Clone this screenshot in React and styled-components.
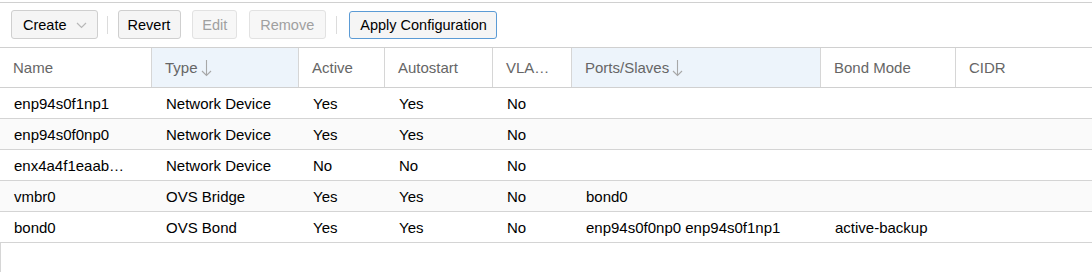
import React from "react";
import styled, { createGlobalStyle } from "styled-components";

const Global = createGlobalStyle`
  html, body { margin: 0; padding: 0; background: #fff; }
  body { font-family: "Liberation Sans", Arial, sans-serif; font-size: 15px; color: #000; }
`;

const COLS = "152px 147px 86px 108px 79px 249px 135px 1fr";

const Panel = styled.div`
  margin-top: 2px;
  border-top: 1px solid #d0d0d0;
  width: 1092px;
  height: 270px;
  display: flex;
  flex-direction: column;
`;

const Toolbar = styled.div`
  display: flex;
  align-items: center;
  height: 45px;
  padding: 0 0 1px 11px;
  border-bottom: 1px solid #d0d0d0;
  box-sizing: border-box;
`;

const Button = styled.button`
  box-sizing: border-box;
  padding: 0 ${(p) => p.$pr ?? 9}px 0 ${(p) => p.$pl ?? 9}px;
  margin-right: ${(p) => p.$mr ?? 11}px;
  font-family: inherit;
  font-size: 14.5px;
  background: ${(p) => (p.disabled ? "#f7f7f7" : "#f5f5f5")};
  color: ${(p) => (p.disabled ? "#a0a0a0" : "#000")};
  border: 1px solid ${(p) => (p.$primary ? "#5b9bd5" : p.disabled ? "#e2e2e2" : "#cfcfcf")};
  border-radius: 3px;
  display: flex;
  align-items: center;
  gap: 9px;
  cursor: default;
  margin-top: ${(p) => (p.$primary ? 1 : 0)}px;
  height: ${(p) => (p.$primary ? 28 : 29)}px;
`;

const Sep = styled.div`
  width: 1px;
  height: 18px;
  background: #dcdcdc;
  margin-right: ${(p) => p.$mr ?? 10}px;
`;

const Chevron = styled.svg`
  width: 11px;
  height: 7px;
  margin-top: 1px;
`;

const HeaderRow = styled.div`
  display: grid;
  grid-template-columns: ${COLS};
  height: 40px;
  border-bottom: 1px solid #d0d0d0;
  box-sizing: border-box;
`;

const HeadCell = styled.div`
  display: flex;
  align-items: center;
  padding-left: 13px;
  color: #666;
  background: ${(p) => (p.$sorted ? "#edf4fb" : "#fff")};
  border-right: ${(p) => (p.$last ? "none" : "1px solid #d6d6d6")};
  white-space: nowrap;
  overflow: hidden;
`;

const SortArrow = styled.svg`
  width: 11px;
  height: 18px;
  margin-left: 3px;
  margin-top: 1px;
`;

const Body = styled.div`
  flex: 1;
  border-left: 1px solid #d6d6d6;
`;

const Row = styled.div`
  display: grid;
  grid-template-columns: ${COLS};
  height: 31px;
  box-sizing: border-box;
  border-bottom: 1px solid #d4d4d4;
  background: ${(p) => (p.$alt ? "#fafafa" : "#fff")};
  margin-left: -1px;
`;

const Cell = styled.div`
  display: flex;
  align-items: center;
  padding-left: 14px;
  padding-top: 1px;
  white-space: nowrap;
  overflow: hidden;
  color: #000;
`;

const headers = [
  { t: "Name" },
  { t: "Type", s: true },
  { t: "Active" },
  { t: "Autostart" },
  { t: "VLA…" },
  { t: "Ports/Slaves", s: true },
  { t: "Bond Mode" },
  { t: "CIDR", last: true },
];

const rows = [
  ["enp94s0f1np1", "Network Device", "Yes", "Yes", "No", "", "", ""],
  ["enp94s0f0np0", "Network Device", "Yes", "Yes", "No", "", "", ""],
  ["enx4a4f1eaab…", "Network Device", "No", "No", "No", "", "", ""],
  ["vmbr0", "OVS Bridge", "Yes", "Yes", "No", "bond0", "", ""],
  ["bond0", "OVS Bond", "Yes", "Yes", "No", "enp94s0f0np0 enp94s0f1np1", "active-backup", ""],
];

export default function App() {
  return (
    <>
      <Global />
      <Panel>
        <Toolbar>
          <Button $pl={11} $pr={10} $mr={9}>
            Create
            <Chevron viewBox="0 0 11 7">
              <path d="M1 1 L5.5 5.5 L10 1" fill="none" stroke="#b8b8b8" strokeWidth="1.2" />
            </Chevron>
          </Button>
          <Sep $mr={10} />
          <Button $pl={9} $pr={10}>Revert</Button>
          <Button disabled $mr={12}>Edit</Button>
          <Button disabled $pl={10} $pr={11} $mr={10}>Remove</Button>
          <Sep $mr={12} />
          <Button $primary $pl={10} $pr={9}>Apply Configuration</Button>
        </Toolbar>
        <HeaderRow>
          {headers.map((h) => (
            <HeadCell key={h.t} $sorted={h.s} $last={h.last}>
              {h.t}
              {h.s && (
                <SortArrow viewBox="0 0 11 18">
                  <path d="M5.5 1 V16.5 M1 12 L5.5 16.5 L10 12" fill="none" stroke="#a8a8a8" strokeWidth="1.1" />
                </SortArrow>
              )}
            </HeadCell>
          ))}
        </HeaderRow>
        <Body>
          {rows.map((r, i) => (
            <Row key={i} $alt={i % 2 === 1}>
              {r.map((c, j) => (
                <Cell key={j}>{c}</Cell>
              ))}
            </Row>
          ))}
        </Body>
      </Panel>
    </>
  );
}
